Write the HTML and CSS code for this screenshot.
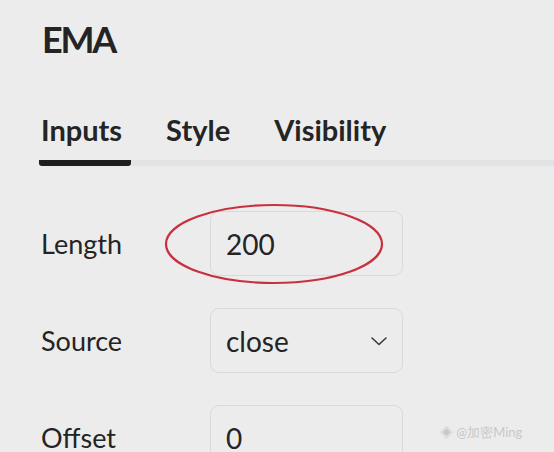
FILE: index.html
```html
<!DOCTYPE html>
<html>
<head>
<meta charset="utf-8">
<link rel="stylesheet" href="styles.css">
</head>
<body>
<div class="panel">
  <h1 class="title">EMA</h1>
  <div class="tabs">
    <div class="tab active">Inputs</div>
    <div class="tab">Style</div>
    <div class="tab">Visibility</div>
  </div>
  <div class="rows">
    <div class="row">
      <div class="label">Length</div>
      <div class="field">
        <span>200</span>
        <svg class="circle" width="222" height="84" viewBox="0 0 222 84"><ellipse cx="111" cy="42" rx="108" ry="39" fill="none" stroke="#c9303e" stroke-width="2.2"/></svg>
      </div>
    </div>
    <div class="row">
      <div class="label">Source</div>
      <div class="field select">
        <span>close</span>
        <svg class="chev" width="18" height="10" viewBox="0 0 18 10"><path d="M2 2 L9 8.5 L16 2" fill="none" stroke="#3a3a3a" stroke-width="1.6" stroke-linecap="round" stroke-linejoin="round"/></svg>
      </div>
    </div>
    <div class="row">
      <div class="label">Offset</div>
      <div class="field"><span>0</span></div>
    </div>
  </div>
  <div class="watermark">◈ @加密Ming</div>
</div>
</body>
</html>
```
FILE: styles.css
```css
html, body {
  margin: 0;
  padding: 0;
  background: #ececec;
  overflow: hidden;
}
body {
  width: 554px;
  height: 452px;
  font-family: "Lato", "Noto Sans", sans-serif;
  color: #242424;
}
.panel {
  position: relative;
  height: 452px;
}
.title {
  margin: 0;
  padding: 14px 0 0 42px;
  font-size: 36px;
  font-weight: 700;
  line-height: 50px;
  letter-spacing: -2.2px;
}
.tabs {
  display: flex;
  gap: 44px;
  margin-top: 46px;
  margin-left: 39px;
  padding-left: 2px;
  border-bottom: 6px solid #e3e3e6;
}
.tab {
  font-size: 29px;
  font-weight: 700;
  line-height: 40px;
  padding-bottom: 10px;
  margin-bottom: -6px;
  border-bottom: 6px solid transparent;
}
.tab.active {
  border-bottom-color: #1e1e1e;
  border-radius: 3px;
  margin-left: -2px;
  margin-right: -9px;
  padding-left: 2px;
  padding-right: 9px;
}
.rows {
  display: flex;
  flex-direction: column;
  gap: 32px;
  padding: 45px 0 0 41px;
}
.row {
  display: flex;
  align-items: center;
}
.label {
  width: 169px;
  font-size: 27px;
}
.field {
  position: relative;
  box-sizing: border-box;
  width: 193px;
  height: 65px;
  border: 1.5px solid #d9d9d9;
  border-radius: 9px;
  display: flex;
  align-items: center;
  justify-content: space-between;
  padding: 0 14px 0 15px;
  font-size: 28px;
}
.circle {
  position: absolute;
  left: -48px;
  top: -10px;
}
.watermark {
  position: absolute;
  left: 440px;
  top: 424px;
  font-size: 13px;
  color: #c8c8c8;
}
```
